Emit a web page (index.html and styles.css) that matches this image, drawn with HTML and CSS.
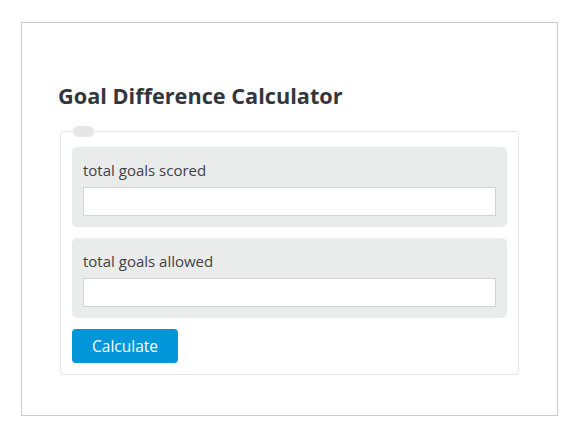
FILE: index.html
```html
<!DOCTYPE html>
<html lang="en">
<head>
    <meta charset="UTF-8">
    <meta name="viewport" content="width=device-width, initial-scale=1.0">
    <title>Goal Difference Calculator</title>
    <link rel="stylesheet" href="styles.css">
</head>
<body>
    <div class="container">
        <h1>Goal Difference Calculator</h1>
        <form class="calc">
            <fieldset>
                <legend></legend>

                <!-- Goals scored -->
                <div class="input-group">
                    <label for="scored">total goals scored</label>
                    <input type="text" id="scored" name="scored">
                </div>

                <!-- Goals allowed -->
                <div class="input-group">
                    <label for="allowed">total goals allowed</label>
                    <input type="text" id="allowed" name="allowed">
                </div>

                <button type="button" class="btn">Calculate</button>
            </fieldset>
        </form>
    </div>
</body>
</html>
```

FILE: styles.css
```css
body {
    font-family: 'Segoe UI', 'Open Sans', 'Noto Sans', sans-serif;
    background-color: #ffffff;
    color: #333;
    margin: 0;
    padding: 0;
}

.container {
    box-sizing: border-box;
    width: 537px;
    height: 394px;
    margin: 22px 0 0 21px;
    padding: 58px 38px 0 36px;
    border: 1px solid #cccccc;
}

h1 {
    margin: 0 0 15px;
    font-size: 21.7px;
    line-height: 30px;
    font-weight: bold;
    color: #32373d;
}

fieldset {
    margin: 0 0 0 2px;
    padding: 10px 11px 11px;
    border: 1px solid #e6e6e6;
    border-radius: 4px;
}

legend {
    width: 21px;
    height: 11px;
    padding: 0;
    margin-left: 1px;
    background: #e6e6e6;
    border-radius: 6px;
}

.input-group {
    background: #eaebeb;
    border-radius: 5px;
    padding: 13px 11px 11px 11px;
    margin-bottom: 11px;
}

.input-group label {
    display: block;
    font-size: 15px;
    line-height: 20px;
    color: #3f4246;
    margin-bottom: 7px;
}

.input-group input {
    display: block;
    box-sizing: border-box;
    width: 100%;
    height: 29px;
    margin: 0;
    border: 1px solid #d3d3d3;
    background: #ffffff;
}

.btn {
    display: block;
    width: 106px;
    height: 34px;
    padding: 0;
    border: none;
    border-radius: 4px;
    background-color: #0096d9;
    color: #ffffff;
    font-family: inherit;
    font-size: 15.5px;
    cursor: pointer;
}
```
